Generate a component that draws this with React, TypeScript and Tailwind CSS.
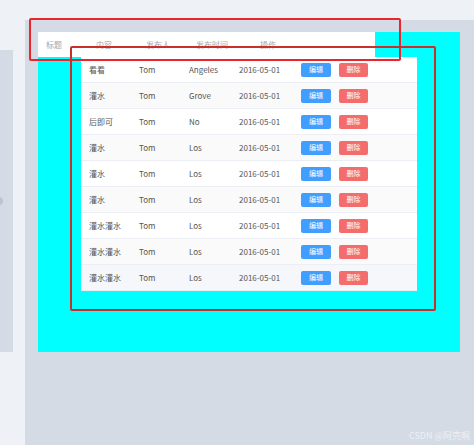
const rows = [
  { title: '看看', name: 'Tom', addr: 'Angeles' },
  { title: '灌水', name: 'Tom', addr: 'Grove' },
  { title: '后即可', name: 'Tom', addr: 'No' },
  { title: '灌水', name: 'Tom', addr: 'Los' },
  { title: '灌水', name: 'Tom', addr: 'Los' },
  { title: '灌水', name: 'Tom', addr: 'Los' },
  { title: '灌水灌水', name: 'Tom', addr: 'Los' },
  { title: '灌水灌水', name: 'Tom', addr: 'Los' },
  { title: '灌水灌水', name: 'Tom', addr: 'Los' },
]

const cols = 'grid grid-cols-[50px_50px_50px_62px_1fr] items-center pl-[8px]'

const App = () => {
  return (
    <div
      className="relative flex h-[445px] w-[474px] overflow-hidden bg-[#eef1f5]"
      style={{ fontFamily: '"Noto Sans CJK SC", "Noto Sans", sans-serif' }}
    >
      {/* left sidebar strip */}
      <div className="w-[25px] shrink-0 pt-[50px]">
        <div className="h-[302px] w-[13px] bg-[#d4dbe5] pt-[147px]">
          <div className="-ml-[5px] h-[8px] w-[8px] rounded-full bg-[#bfc5cf]" />
        </div>
      </div>

      {/* main area */}
      <div className="mt-[20px] flex-1 bg-[#d4dbe5] pb-[93px] pl-[13px] pr-[14px] pt-[12px]">
        <div className="h-[320px] bg-[#00ffff]">
          <div className={`${cols} h-[25px] w-[337px] bg-white text-[8px] text-[#a3a6ad]`}>
            <span>标题</span>
            <span>内容</span>
            <span>发布人</span>
            <span>发布时间</span>
            <span className="pl-[2px]">操作</span>
          </div>

          <div className="ml-[43px] w-[336px] bg-white">
            {rows.map((row, i) => (
              <div
                key={i}
                className={`${cols} h-[26px] border-b border-[#ebeef5] text-[8px] text-[#555] ${
                  i === 8 ? 'bg-[#f5f7fa]' : i % 2 === 1 ? 'bg-[#fafafa]' : 'bg-white'
                }`}
              >
                <span>{row.title}</span>
                <span>{row.name}</span>
                <span>{row.addr}</span>
                <span>2016-05-01</span>
                <div className="flex items-center gap-[8px]">
                  <button className="flex h-[14px] w-[30px] items-center justify-center rounded-[2px] bg-[#409eff] text-[7px] text-white">
                    编辑
                  </button>
                  <button className="flex h-[14px] w-[29px] items-center justify-center rounded-[2px] bg-[#f56c6c] text-[7px] text-white">
                    删除
                  </button>
                </div>
              </div>
            ))}
          </div>
        </div>
      </div>

      {/* annotation boxes */}
      <div className="absolute left-[29px] top-[18px] h-[43px] w-[372px] rounded-[2px] border-2 border-[#e8262b]" />
      <div className="absolute left-[70px] top-[46px] h-[265px] w-[366px] rounded-[2px] border-2 border-[#c8302a]" />

      <span className="absolute bottom-[3px] right-[4px] text-[9px] text-[#eef0f4]">CSDN @阿壳啊</span>
    </div>
  )
}

export default App
